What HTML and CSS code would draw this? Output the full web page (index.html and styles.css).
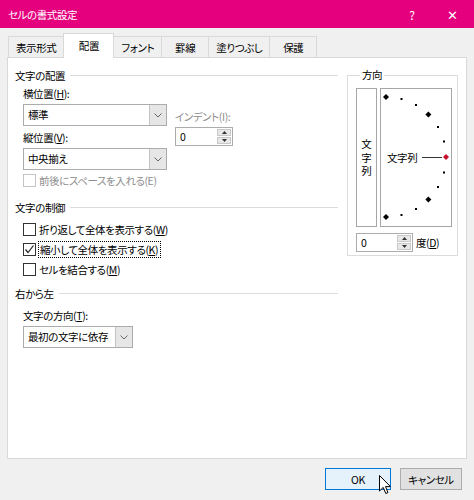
FILE: index.html
```html
<!DOCTYPE html>
<html lang="ja">
<head>
    <meta charset="UTF-8">
    <meta name="viewport" content="width=device-width, initial-scale=1.0">
    <title>セルの書式設定</title>
    <link rel="stylesheet" href="styles.css">
</head>
<body>
    <div class="dialog">
        <div class="title-bar">
            <span class="title">セルの書式設定</span>
            <span class="title-btn">?</span>
            <span class="title-btn close">✕</span>
        </div>

        <div class="tabs">
            <div class="tab">表示形式</div>
            <div class="tab active">配置</div>
            <div class="tab">フォント</div>
            <div class="tab">罫線</div>
            <div class="tab">塗りつぶし</div>
            <div class="tab">保護</div>
        </div>

        <div class="panel">
            <div class="main-col">
                <div class="group-title">文字の配置</div>
                <div class="align-block">
                    <div class="align-selects">
                        <div class="label">横位置(<u>H</u>):</div>
                        <div class="combo">
                            <span class="combo-text">標準</span>
                            <span class="combo-arrow"><svg width="8" height="5" viewBox="0 0 8 5"><polyline points="0.5,0.5 4,4 7.5,0.5" fill="none" stroke="#666" stroke-width="1"/></svg></span>
                        </div>
                        <div class="label label-gap">縦位置(<u>V</u>):</div>
                        <div class="combo">
                            <span class="combo-text">中央揃え</span>
                            <span class="combo-arrow"><svg width="8" height="5" viewBox="0 0 8 5"><polyline points="0.5,0.5 4,4 7.5,0.5" fill="none" stroke="#666" stroke-width="1"/></svg></span>
                        </div>
                    </div>
                    <div class="indent-col">
                        <div class="label disabled">インデント(I):</div>
                        <div class="spin">
                            <span class="spin-value">0</span>
                            <span class="spin-btns">
                                <span class="spin-btn"><svg width="5" height="3" viewBox="0 0 5 3"><polygon points="2.5,0 5,3 0,3" fill="#333"/></svg></span>
                                <span class="spin-btn"><svg width="5" height="3" viewBox="0 0 5 3"><polygon points="0,0 5,0 2.5,3" fill="#333"/></svg></span>
                            </span>
                        </div>
                    </div>
                </div>
                <div class="check-row disabled first-check">
                    <span class="checkbox"></span>
                    <span>前後にスペースを入れる(E)</span>
                </div>

                <div class="group-title">文字の制御</div>
                <div class="check-list">
                    <div class="check-row">
                        <span class="checkbox"></span>
                        <span>折り返して全体を表示する(<u>W</u>)</span>
                    </div>
                    <div class="check-row">
                        <span class="checkbox"><svg width="11" height="11" viewBox="0 0 11 11"><polyline points="1.5,5.5 4,8.5 9.5,1.5" fill="none" stroke="#222" stroke-width="1.2"/></svg></span>
                        <span class="focused">縮小して全体を表示する(<u>K</u>)</span>
                    </div>
                    <div class="check-row">
                        <span class="checkbox"></span>
                        <span>セルを結合する(<u>M</u>)</span>
                    </div>
                </div>

                <div class="group-title rtl-title">右から左</div>
                <div class="dir-block">
                    <div class="label">文字の方向(<u>T</u>):</div>
                    <div class="combo combo-short">
                        <span class="combo-text">最初の文字に依存</span>
                        <span class="combo-arrow"><svg width="8" height="5" viewBox="0 0 8 5"><polyline points="0.5,0.5 4,4 7.5,0.5" fill="none" stroke="#666" stroke-width="1"/></svg></span>
                    </div>
                </div>
            </div>

            <fieldset class="orient">
                <legend>方向</legend>
                <div class="orient-boxes">
                    <div class="vertical-box"><span class="vertical-text">文字列</span></div>
                    <div class="dial">
                        <svg width="70" height="137" viewBox="0 0 70 137">
                            <g fill="#000">
                                <polygon points="5,5 8,8 5,11 2,8"/>
                                <polygon points="47.4,22.6 50.4,25.6 47.4,28.6 44.4,25.6"/>
                                <polygon points="47.4,107.4 50.4,110.4 47.4,113.4 44.4,110.4"/>
                                <polygon points="5,125 8,128 5,131 2,128"/>
                                <rect x="19.5" y="9" width="2" height="2"/>
                                <rect x="34" y="15" width="2" height="2"/>
                                <rect x="56" y="37" width="2" height="2"/>
                                <rect x="62" y="51.5" width="2" height="2"/>
                                <rect x="62" y="82.5" width="2" height="2"/>
                                <rect x="56" y="97" width="2" height="2"/>
                                <rect x="34" y="119" width="2" height="2"/>
                                <rect x="19.5" y="125" width="2" height="2"/>
                            </g>
                            <line x1="41" y1="68.5" x2="61" y2="68.5" stroke="#333" stroke-width="1"/>
                            <polygon points="65,65 68,68 65,71 62,68" fill="#c8102e"/>
                            <text x="6" y="73" class="dial-text">文字列</text>
                        </svg>
                    </div>
                </div>
                <div class="degree-row">
                    <div class="spin spin-deg">
                        <span class="spin-value">0</span>
                        <span class="spin-btns">
                            <span class="spin-btn"><svg width="5" height="3" viewBox="0 0 5 3"><polygon points="2.5,0 5,3 0,3" fill="#333"/></svg></span>
                            <span class="spin-btn"><svg width="5" height="3" viewBox="0 0 5 3"><polygon points="0,0 5,0 2.5,3" fill="#333"/></svg></span>
                        </span>
                    </div>
                    <span class="degree-label">度(<u>D</u>)</span>
                </div>
            </fieldset>
        </div>

        <div class="buttons">
            <button class="btn btn-default">OK</button>
            <button class="btn">キャンセル</button>
            <svg class="pointer" width="13" height="20" viewBox="0 0 13 20"><path d="M0.5,0.5 L0.5,16 L4.2,12.4 L6.8,18.5 L9,17.6 L6.5,11.6 L11.5,11.6 Z" fill="#fff" stroke="#000" stroke-width="1" stroke-linejoin="round"/></svg>
        </div>
    </div>
</body>
</html>
```

FILE: styles.css
```css
body {
    margin: 0;
    font-family: "Noto Sans CJK JP", "Noto Sans", sans-serif;
    font-size: 10.5px;
    letter-spacing: -0.4px;
    font-feature-settings: "palt";
    color: #000;
}

.dialog {
    position: relative;
    width: 474px;
    height: 500px;
    background-color: #f0f0f0;
    display: flex;
    flex-direction: column;
}

/* window caption */
.title-bar {
    height: 28px;
    flex: none;
    display: flex;
    align-items: center;
    padding: 0 2px 0 8px;
    background-color: #e5007e;
    color: #fff;
}

.title {
    flex: 1;
}

.title-btn {
    width: 40px;
    text-align: center;
    font-size: 12px;
}

.title-btn.close {
    font-size: 13px;
}

/* tabs */
.tabs {
    display: flex;
    align-items: flex-end;
    height: 24px;
    margin-top: 5px;
    padding-left: 8px;
    flex: none;
}

.tab {
    height: 21px;
    min-width: 48px;
    padding: 0 7px;
    box-sizing: border-box;
    border: 1px solid #d9d9d9;
    border-bottom: none;
    margin-left: -1px;
    display: flex;
    align-items: center;
    justify-content: center;
    background-color: #f0f0f0;
}

.tab:first-child {
    margin-left: 0;
}

.tab.active {
    position: relative;
    z-index: 1;
    height: 25px;
    margin-bottom: -1px;
    padding-bottom: 2px;
    background-color: #fff;
    min-width: 51px;
}

/* page */
.panel {
    height: 402px;
    margin: 0 7px;
    flex: none;
    box-sizing: border-box;
    border: 1px solid #d9d9d9;
    background-color: #fff;
    display: flex;
    align-items: flex-start;
    padding: 9px 6px 0 7px;
}

.main-col {
    width: 323px;
    margin-right: 9px;
}

.group-title {
    height: 16px;
    display: flex;
    align-items: center;
}

.group-title::after {
    content: '';
    flex: 1;
    height: 1px;
    margin-left: 5px;
    background-color: #dcdcdc;
}

.label {
    height: 16px;
    line-height: 16px;
}

.disabled {
    color: #8d8d8d;
}

.align-block {
    display: flex;
    padding-left: 8px;
    margin-top: 3px;
}

.align-selects {
    width: 144px;
}

.label-gap {
    margin-top: 4px;
}

.combo {
    height: 22px;
    margin-top: 2px;
    box-sizing: border-box;
    border: 1px solid #acacac;
    background-color: #fff;
    display: flex;
}

.combo-short {
    width: 110px;
}

.combo-text {
    flex: 1;
    padding-left: 4px;
    line-height: 20px;
    white-space: nowrap;
    overflow: hidden;
}

.combo-arrow {
    width: 16px;
    border-left: 1px solid #c3c3c3;
    background-color: #e6e6e6;
    display: flex;
    align-items: center;
    justify-content: center;
}

.indent-col {
    margin-left: 8px;
    padding-top: 23px;
}

.spin {
    width: 58px;
    height: 19px;
    margin-top: 2px;
    box-sizing: border-box;
    border: 1px solid #acacac;
    background-color: #fff;
    display: flex;
}

.spin-value {
    flex: 1;
    padding-left: 4px;
    line-height: 17px;
}

.spin-btns {
    width: 14px;
    display: flex;
    flex-direction: column;
    padding: 1px;
    gap: 1px;
}

.spin-btn {
    flex: 1;
    border: 1px solid #c8c8c8;
    background-color: #e8e8e8;
    display: flex;
    align-items: center;
    justify-content: center;
}

/* checkboxes */
.check-row {
    height: 20px;
    display: flex;
    align-items: center;
    padding-left: 8px;
}

.first-check {
    margin-top: 1px;
    height: 18px;
    margin-bottom: 10px;
}

.checkbox {
    width: 13px;
    height: 13px;
    box-sizing: border-box;
    border: 1px solid #333;
    background-color: #fff;
    margin-right: 3px;
    display: flex;
    align-items: center;
    justify-content: center;
    flex: none;
}

.check-row.disabled .checkbox {
    border-color: #c4c4c4;
}

.focused {
    outline: 1px dotted #000;
    padding: 0 2px 0 1px;
}

.check-list {
    margin-top: 4px;
}

.rtl-title {
    margin-top: 6px;
}

.dir-block {
    padding-left: 8px;
    margin-top: 7px;
}

/* orientation group */
.orient {
    width: 111px;
    margin: 0;
    padding: 5px 0 3px 8px;
    box-sizing: border-box;
    border: 1px solid #dcdcdc;
}

.orient legend {
    margin-left: 4px;
    padding: 0 2px;
    line-height: 16px;
}

.orient-boxes {
    display: flex;
    gap: 3px;
}

.vertical-box {
    width: 21px;
    height: 139px;
    box-sizing: border-box;
    border: 1px solid #a6a6a6;
    display: flex;
    align-items: center;
    justify-content: center;
}

.vertical-text {
    writing-mode: vertical-rl;
    letter-spacing: 3px;
    margin-top: 3px;
}

.dial {
    width: 72px;
    height: 139px;
    box-sizing: border-box;
    border: 1px solid #a6a6a6;
}

.dial svg {
    display: block;
}

.dial-text {
    font-family: "Noto Sans CJK JP", sans-serif;
    font-size: 10.5px;
}

.degree-row {
    display: flex;
    align-items: center;
    margin-top: 6px;
}

.spin-deg {
    margin-top: 0;
    width: 57px;
}

.degree-label {
    margin-left: 3px;
}

/* bottom buttons */
.buttons {
    position: relative;
    flex: 1;
    display: flex;
    justify-content: flex-end;
    align-items: flex-start;
    gap: 9px;
    padding: 9px 12px 0 0;
}

.btn {
    width: 62px;
    height: 22px;
    font-family: inherit;
    font-size: 10.5px;
    letter-spacing: -0.4px;
    font-feature-settings: "palt";
    border: 1px solid #adadad;
    background-color: #e1e1e1;
    color: #000;
    padding: 0;
}

.btn-default {
    width: 66px;
    border-color: #0078d7;
    background-color: #e5f1fb;
}

.pointer {
    position: absolute;
    left: 379px;
    top: 16px;
}
```
